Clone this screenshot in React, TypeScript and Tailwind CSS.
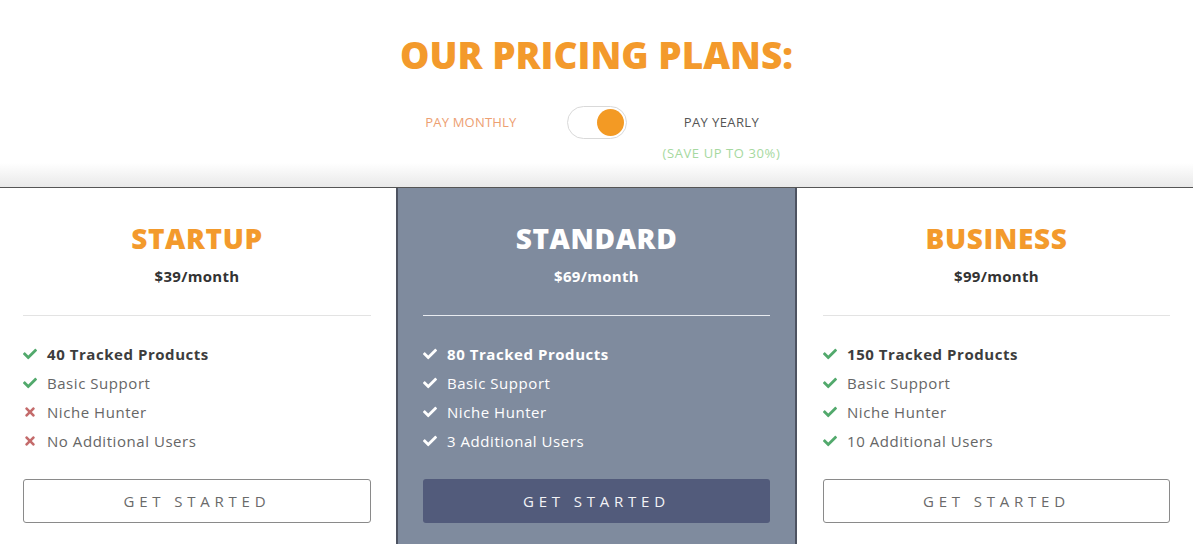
import React from 'react';
import { FaCheck, FaTimes } from 'react-icons/fa';

type Feature = { text: string; ok: boolean; bold?: boolean };

const plans: { name: string; price: string; featured?: boolean; pad: string; features: Feature[] }[] = [
  {
    name: 'STARTUP',
    price: '$39/month',
    pad: 'pl-[23px] pr-[25px]',
    features: [
      { text: '40 Tracked Products', ok: true, bold: true },
      { text: 'Basic Support', ok: true },
      { text: 'Niche Hunter', ok: false },
      { text: 'No Additional Users', ok: false },
    ],
  },
  {
    name: 'STANDARD',
    price: '$69/month',
    featured: true,
    pad: 'px-[25px]',
    features: [
      { text: '80 Tracked Products', ok: true, bold: true },
      { text: 'Basic Support', ok: true },
      { text: 'Niche Hunter', ok: true },
      { text: '3 Additional Users', ok: true },
    ],
  },
  {
    name: 'BUSINESS',
    price: '$99/month',
    pad: 'pl-[26px] pr-[23px]',
    features: [
      { text: '150 Tracked Products', ok: true, bold: true },
      { text: 'Basic Support', ok: true },
      { text: 'Niche Hunter', ok: true },
      { text: '10 Additional Users', ok: true },
    ],
  },
];

const PlanCard = ({ plan }: { plan: (typeof plans)[number] }) => {
  const f = plan.featured;
  return (
    <div
      className={`${plan.pad} pb-[21px] ${f ? 'bg-[#7f8b9e] border-x-2 border-[#4d5361]' : 'bg-white'}`}
    >
      <div className="h-[127px] flex flex-col items-center">
        <h2
          className={`mt-[34px] text-[28px] leading-[32px] font-extrabold tracking-[0.6px] ${f ? 'text-white' : 'text-[#f39a2c]'}`}
        >
          {plan.name}
        </h2>
        <div className={`mt-[11px] text-[15px] font-bold tracking-[0.3px] ${f ? 'text-white' : 'text-[#333]'}`}>
          {plan.price}
        </div>
      </div>
      <div className={`h-px ${f ? 'bg-[#e8ebf0]' : 'bg-[#e3e3e3]'}`} />
      <ul className="mt-[28px] flex flex-col gap-[9px]">
        {plan.features.map((ft) => (
          <li key={ft.text} className="flex items-center h-[20px]">
            <span className="w-[14px] flex justify-center">
              {ft.ok ? (
                <FaCheck className={`w-[14px] h-[14px] ${f ? 'text-white' : 'text-[#52a96c]'}`} />
              ) : (
                <FaTimes className="w-[12px] h-[14px] text-[#c46b6b]" />
              )}
            </span>
            <span
              className={`ml-[10px] text-[15px] tracking-[0.55px] ${ft.bold ? 'font-bold' : 'font-normal'} ${
                f ? 'text-white' : ft.bold ? 'text-[#3d3d3d]' : 'text-[#666]'
              }`}
            >
              {ft.text}
            </span>
          </li>
        ))}
      </ul>
      <button
        className={
          f
            ? 'mt-[28px] w-full h-[44px] rounded-[3px] bg-[#525b7b] text-[#f2f3f6] text-[15px] tracking-[4.8px]'
            : 'mt-[28px] w-full h-[44px] rounded-[3px] border border-[#8a8a8a] bg-white text-[#6a6a6a] text-[15px] tracking-[4.8px]'
        }
      >
        GET STARTED
      </button>
    </div>
  );
};

export default function App() {
  return (
    <div
      className="w-[1193px] h-[545px] overflow-hidden bg-white"
      style={{ fontFamily: '"Open Sans", "Liberation Sans", sans-serif' }}
    >
      <div className="h-[188px] flex flex-col border-b border-[#555]">
        <h1 className="mt-[35px] text-center text-[37px] leading-[40px] font-extrabold text-[#f39a2c]">
          OUR PRICING PLANS:
        </h1>
        <div className="mt-[31px] grid grid-cols-[1fr_60px_1fr]">
          <div className="justify-self-end pr-[50px] pt-[7px] text-[13px] tracking-[0.2px] text-[#eda072]">
            PAY MONTHLY
          </div>
          <div className="relative w-[60px] h-[33px] rounded-full border border-[#d9d9d9] bg-white">
            <div className="absolute right-[2px] top-[2px] w-[27px] h-[27px] rounded-full bg-[#f39a24]" />
          </div>
          <div className="pl-[36px]">
            <div className="w-fit flex flex-col items-center">
              <div className="pt-[7px] text-[13px] tracking-[0.4px] text-[#555]">PAY YEARLY</div>
              <div className="mt-[11px] text-[13px] tracking-[0.6px] text-[#a6d9a0]">(SAVE UP TO 30%)</div>
            </div>
          </div>
        </div>
        <div className="mt-auto h-[24px] bg-gradient-to-b from-white to-[#e9e9e9]" />
      </div>
      <div className="grid grid-cols-[396px_401px_1fr]">
        {plans.map((p) => (
          <PlanCard key={p.name} plan={p} />
        ))}
      </div>
    </div>
  );
}
